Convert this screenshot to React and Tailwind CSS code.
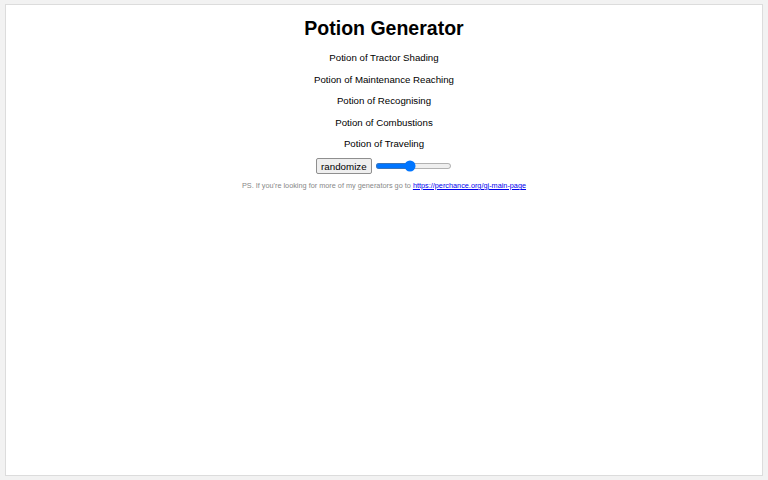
import React, { useState } from 'react';

const potions = [
    'Potion of Tractor Shading',
    'Potion of Maintenance Reaching',
    'Potion of Recognising',
    'Potion of Combustions',
    'Potion of Traveling',
];

const App = () => {
    const [amount, setAmount] = useState(45);

    return (
        <div className="h-screen bg-[#f2f2f2] pt-[4px] pb-[4px] pl-[5px] pr-[5px] font-['Liberation_Sans',Arial,sans-serif]">
            <div className="h-full bg-white border border-[#dcdcdc] flex flex-col items-center pt-[12px]">
                <h1 className="text-[19.5px] leading-[22px] font-bold text-black">Potion Generator</h1>
                <div className="flex flex-col items-center gap-[9.5px] mt-[13px]">
                    {potions.map(p => (
                        <p key={p} className="text-[9.7px] leading-[12px] text-black">{p}</p>
                    ))}
                </div>
                <div className="flex items-center gap-[3px] mt-[8px]">
                    <button className="text-[9.75px] leading-[11px] text-black bg-[#efefef] border border-[#8f8f8f] rounded-[2px] px-[4px] py-[1.5px]">
                        randomize
                    </button>
                    {/* native slider, shrunk the way the page's zoom does it */}
                    <input
                        type="range"
                        min="0"
                        max="100"
                        value={amount}
                        onChange={(e) => setAmount(e.target.value)}
                        className="[zoom:0.75] w-[103px] accent-[#0075ff]"
                    />
                </div>
                <p className="text-[7.3px] leading-[9px] text-[#888] mt-[7px]">
                    PS. If you're looking for more of my generators go to{' '}
                    <a href="#" className="text-[#0000ee] underline">https://perchance.org/gj-main-page</a>
                </p>
            </div>
        </div>
    );
};

export default App;
